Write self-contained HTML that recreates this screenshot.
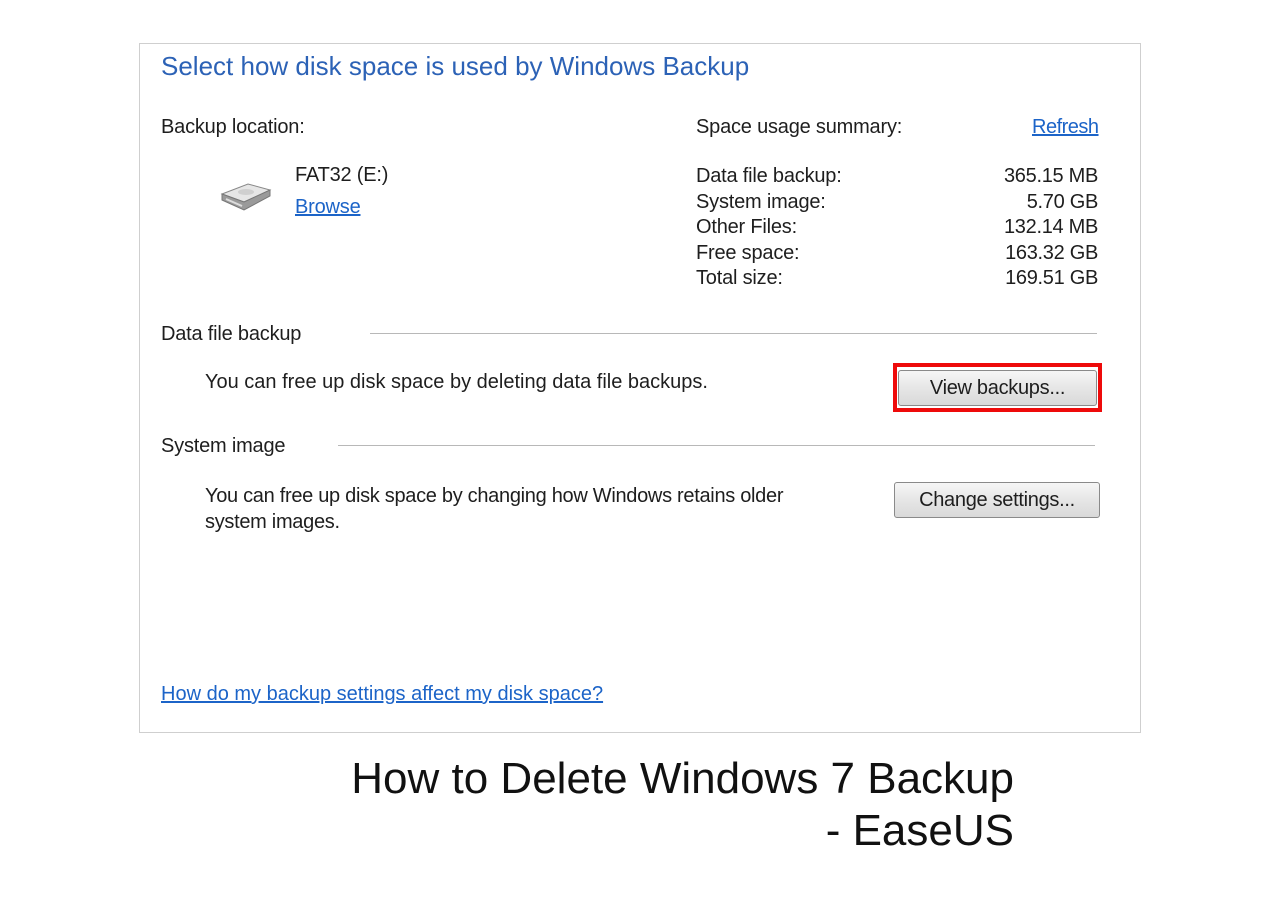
<!DOCTYPE html>
<html><head><meta charset="utf-8"><style>
body{margin:0;width:1280px;height:900px;background:#fff;position:relative;font-family:"Liberation Sans",sans-serif;overflow:hidden}
.box{position:absolute;left:139px;top:43px;width:1002px;height:690px;border:1px solid #cfcfcf;box-sizing:border-box}
.t{position:absolute;white-space:nowrap;font-size:20px;color:#1e1e1e;line-height:22px;letter-spacing:0px}
.r{text-align:right}
.lnk{color:#1c64c8;text-decoration:underline}
.hr{position:absolute;height:1px;background:#b8b8b8}
.btn{position:absolute;border:1px solid #8a8a8a;border-radius:3px;background:linear-gradient(#f6f6f6,#e6e6e6 50%,#d9d9d9);box-sizing:border-box;text-align:center;font-size:20px;color:#1e1e1e;letter-spacing:-0.3px}
</style></head><body>
<div class="box"></div>
<div class="t" style="left:161px;top:51px;font-size:26px;line-height:30px;color:#2c62b6">Select how disk space is used by Windows Backup</div>
<div class="t" style="left:161px;top:116px;letter-spacing:-0.2px">Backup location:</div>
<svg style="position:absolute;left:218px;top:180px" width="56" height="34" viewBox="0 0 56 34">
<path d="M4 14 L30 4 L52 10 L26 22 Z" fill="#e6e6e6" stroke="#888"/>
<path d="M4 14 L4 20 L26 30 L52 16 L52 10 L26 22 Z" fill="#9a9a9a" stroke="#777"/>
<path d="M8 19 L24 26" stroke="#ddd" stroke-width="2"/>
<ellipse cx="28" cy="12" rx="8" ry="3" fill="#cfcfcf"/>
</svg>
<div class="t" style="left:295px;top:164px;letter-spacing:-0.2px">FAT32 (E:)</div>
<div class="t lnk" style="left:295px;top:196px;letter-spacing:-0.2px">Browse</div>
<div class="t" style="left:696px;top:116px;letter-spacing:-0.2px">Space usage summary:</div>
<div class="t lnk" style="left:1032px;top:116px;letter-spacing:-0.5px">Refresh</div>
<div class="t" style="left:696px;top:164px;line-height:25.5px;letter-spacing:-0.2px">Data file backup:<br>System image:<br>Other Files:<br>Free space:<br>Total size:</div>
<div class="t r" style="right:182px;top:164px;line-height:25.5px;letter-spacing:-0.3px">365.15 MB<br>5.70 GB<br>132.14 MB<br>163.32 GB<br>169.51 GB</div>
<div class="t" style="left:161px;top:323px;letter-spacing:-0.2px">Data file backup</div>
<div class="hr" style="left:370px;top:333px;width:727px"></div>
<div class="t" style="left:205px;top:371px">You can free up disk space by deleting data file backups.</div>
<div style="position:absolute;left:893px;top:363px;width:209px;height:49px;border:4px solid #ee0a0a;box-sizing:border-box"></div>
<div class="btn" style="left:898px;top:370px;width:199px;height:36px;line-height:34px">View backups...</div>
<div class="t" style="left:161px;top:435px;letter-spacing:-0.2px">System image</div>
<div class="hr" style="left:338px;top:445px;width:757px"></div>
<div class="t" style="left:205px;top:483px;line-height:26px;letter-spacing:-0.3px">You can free up disk space by changing how Windows retains older<br>system images.</div>
<div class="btn" style="left:894px;top:482px;width:206px;height:36px;line-height:34px">Change settings...</div>
<div class="t lnk" style="left:161px;top:683px">How do my backup settings affect my disk space?</div>
<div class="t r" style="right:266px;top:753px;font-size:44px;line-height:52px;letter-spacing:0px;color:#111">How to Delete Windows 7 Backup<br>- EaseUS</div>
</body></html>
